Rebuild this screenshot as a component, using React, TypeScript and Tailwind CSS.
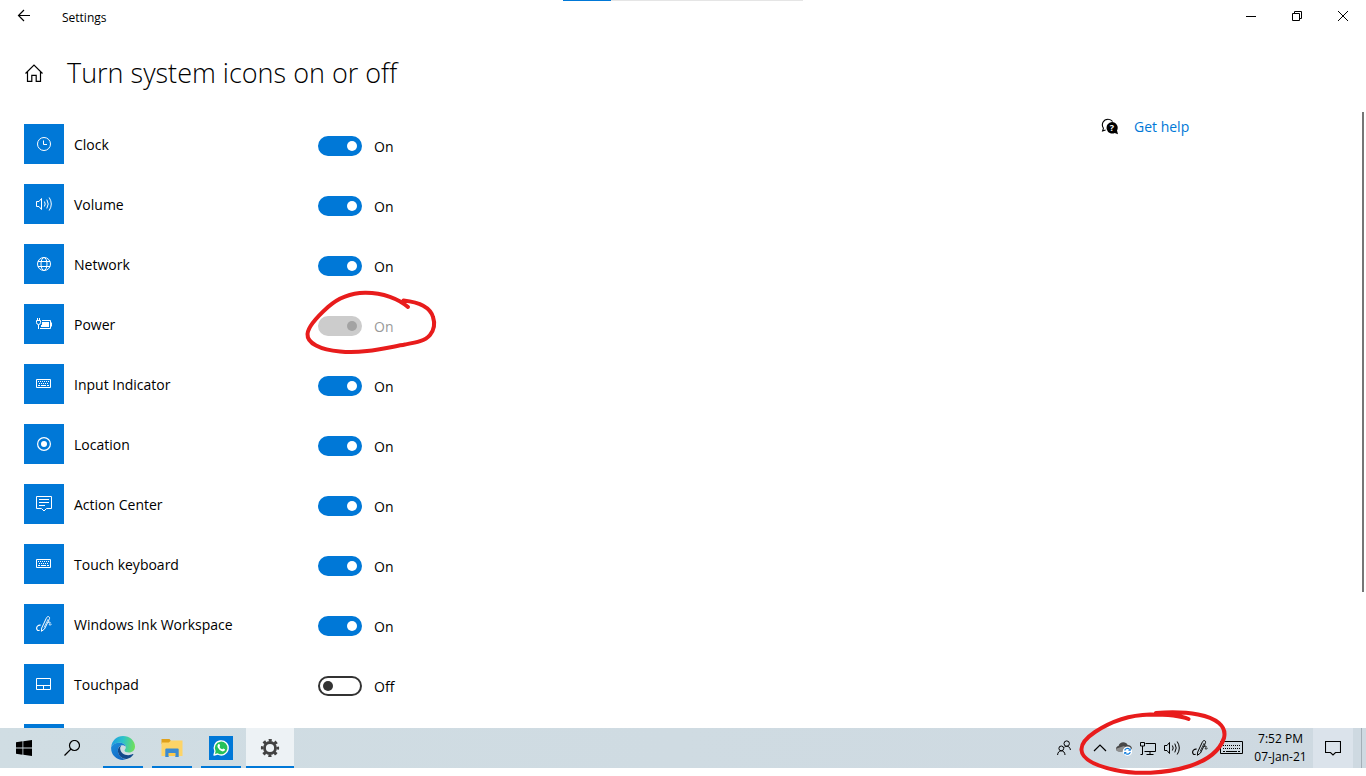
import { useState } from 'react';
import type { ReactNode } from 'react';

function Glyph({ className = 'size-4', children }: { className?: string; children: ReactNode }) {
  return (
    <svg viewBox="0 0 16 16" className={className} fill="none" stroke="currentColor" aria-hidden="true">
      {children}
    </svg>
  );
}

const ClockIcon = () => (
  <Glyph>
    <circle cx="8" cy="8" r="6.5" />
    <path d="M7.5 4.5v4H11" />
  </Glyph>
);

const VolumeIcon = () => (
  <Glyph>
    <path d="M.5 5.5H3l2.5-3v11l-2.5-3H.5z" />
    <path d="M8.4 5.5q1.6 2.5 0 5M10.8 3.6q2.8 4.4 0 8.8M13.2 1.5q4.2 6.5 0 13" />
  </Glyph>
);

const GlobeIcon = () => (
  <Glyph>
    <circle cx="8" cy="8" r="6.5" />
    <ellipse cx="8" cy="8" rx="3" ry="6.5" />
    <path d="M2 5.5h12M2 10.5h12" />
  </Glyph>
);

const PowerIcon = () => (
  <Glyph>
    <path d="M6 4.5h8.5v8H4" />
    <path d="M6 6h7v5H5V9h1z" fill="currentColor" stroke="none" />
    <path d="M15.5 6.5v4M1.5 2v2M3.5 2v2M.5 4.5h4v2a2 2 0 0 1-4 0zM2.5 8.500v4.5" />
  </Glyph>
);

const KeyboardIcon = () => (
  <Glyph>
    <path d="M.5 3.5h14v8H.5z" />
    <path d="M2 5.5h11M3 7.5h10" strokeDasharray="1 1" />
    <path d="M2 9.5h2M5 9.5h5M11 9.5h2" />
  </Glyph>
);

const LocationIcon = () => (
  <Glyph>
    <circle cx="8" cy="8" r="6.4" strokeWidth="1.2" />
    <circle cx="8" cy="8" r="3" fill="currentColor" stroke="none" />
  </Glyph>
);

const ActionCenterIcon = () => (
  <Glyph>
    <path d="M.5.5h15v12h-5L8 15l-2.5-2.5h-5z" />
    <path d="M3 3.5h10M3 6.5h10M3 9.5h6" />
  </Glyph>
);

const InkIcon = () => (
  <Glyph>
    <path d="M4.6 9.2C2.4 8.8.6 10.4.6 12.3c0 1.700 1.300 2.500 3 2.100" strokeWidth="1.200" />
    <path d="M5.400 15.300 5.700 12 10.300 2.200c.6-1.300 1.500-1.900 2.500-1.500 1 .5 1 1.500.4 2.800L8.500 13z" />
    <path d="M8 11.500 12.200 3" strokeWidth=".7" />
    <path d="M12 6.700c1-.8 2.200-.7 2.300 0 .1.700-1.300 1.200-1 2 .3.600 1.400.200 2.200-.4" />
  </Glyph>
);

const TouchpadIcon = () => (
  <Glyph>
    <path d="M.5 2.5h14v11H.5zM.5 9.5h14M7.5 9.5v4" />
  </Glyph>
);

const HomeIcon = () => (
  <svg viewBox="0 0 20 20" className="size-5" fill="none" stroke="currentColor" strokeWidth="1.2" aria-hidden="true">
    <path d="M1.5 10.5 10 2l8.5 8.5M3.5 9v9.4h4.3v-6h4.400v6h4.300V9" />
  </svg>
);

const HelpIcon = () => (
  <svg viewBox="0 0 18 18" className="size-[18px]" aria-hidden="true">
    <path
      d="M2.500 10.200C-.2 6.500 2.300 1.200 7 1.200c2 0 3.600.9 4.600 2.300M2.500 10.200 1.600 13l3-1"
      fill="none"
      stroke="#000"
      strokeWidth="1.100"
    />
    <path d="M11 4a5.800 5.800 0 0 1 5 8.600l1 3.600-3.300-1.100A5.800 5.800 0 1 1 11 4z" />
    <text x="11" y="13" fill="#fff" fontSize="9" fontWeight="700" textAnchor="middle">?</text>
  </svg>
);

const StartIcon = () => (
  <svg viewBox="0 0 16 16" className="size-4" aria-hidden="true">
    <path d="M0 2.200 6.500 1.300v6.200H0zM7.300 1.200 16 0v7.500H7.300zM0 8.400h6.500v6.300L0 13.800zM7.300 8.400H16V16l-8.700-1.200z" />
  </svg>
);

const SearchIcon = () => (
  <Glyph>
    <circle cx="10.5" cy="5.5" r="5" strokeWidth="1.2" />
    <path d="M6.9 9.1.5 15.5" strokeWidth="1.3" />
  </Glyph>
);

const EdgeIcon = () => (
  <svg viewBox="0 0 24 24" className="size-6" aria-hidden="true">
    <defs>
      <linearGradient id="edgeTop" x1="0" y1="0.3" x2="1" y2="0.4">
        <stop offset="0" stopColor="#1b9de2" />
        <stop offset="0.5" stopColor="#2fc3c8" />
        <stop offset="1" stopColor="#6fe05a" />
      </linearGradient>
      <linearGradient id="edgeLeft" x1="0" y1="0" x2="0.6" y2="1">
        <stop offset="0" stopColor="#1d8fdc" />
        <stop offset="1" stopColor="#1169c4" />
      </linearGradient>
    </defs>
    <path
      d="M.2 11C.8 4.600 5.900 0 12 0c6.800 0 12 4.800 12 10.400 0 3.700-2.700 6-6 6-2.800 0-4.500-1-4.500-2 0-.8 1.300-1.300 1.300-3.200C14.800 8.600 12 6.800 8.600 6.800 4.600 6.800 1.400 8.400.2 11z"
      fill="url(#edgeTop)"
    />
    <path
      d="M.2 11C1.500 8.300 4.500 6.800 8.600 6.800c3.400 0 6 1.700 6.200 4-.8-1-2-1.500-3.300-1.500-2.800 0-4.600 2.300-4.600 5.200 0 4.700 3.800 8.600 8.700 8.300-1.200.7-2.500 1.200-4 1.200C5.200 24-.6 18.400.2 11z"
      fill="url(#edgeLeft)"
    />
    <path
      d="M6.900 14.500c0-2.500 1.400-4.500 3.600-5.100-1 .9-1.500 2.200-1.300 3.600.4 3.600 3.800 6.200 8 6.200 1.800 0 3.200-.5 4.500-1.200.6-.3 1 .1.700.6-1.400 2.300-3.900 4.100-6.600 4.300-5 .2-8.900-3.600-8.900-8.400z"
      fill="#114a8b"
    />
  </svg>
);

const ExplorerIcon = () => (
  <svg viewBox="0 0 22 20" className="h-5 w-[22px]" aria-hidden="true">
    <path d="M.5 1h8l1.500 2v3H.5z" fill="#e0a11b" />
    <path d="M.5 4.5h7.300L10 2.500h11.500V18H.5z" fill="#fdd467" />
    <path d="M4.300 18v-6.500q0-1 1-1h11.400q1 0 1 1V19h-3.400v-4H7.700v4H4.300z" fill="#3c8bd0" />
    <path d="M7.700 15h6.600v3H7.700z" fill="#fbc94d" />
  </svg>
);

const WhatsAppIcon = () => (
  <svg viewBox="0 0 24 24" className="size-6 bg-[#0078d7]" aria-hidden="true">
    <path d="M5 19l1-3.800A7 7 0 1 1 8.700 18z" fill="#25c15a" stroke="#fff" strokeWidth="1.300" strokeLinejoin="round" />
    <path
      d="M9.300 8.200c.4-.3 1-.3 1.200.1l.6 1.400c.1.400-.6.900-.6 1.200.5 1.100 1.400 1.900 2.600 2.400.4 0 .8-.9 1.200-.8l1.500.8c.4.200.2.900-.1 1.300-.8.900-2 1-3.200.5a7.600 7.600 0 0 1-3.700-3.500c-.5-1.300-.4-2.600.5-3.400z"
      fill="#fff"
    />
  </svg>
);

const GearIcon = () => (
  <svg viewBox="0 0 20 20" className="size-5" fill="none" stroke="#424242" aria-hidden="true">
    <circle cx="10" cy="10" r="5.5" strokeWidth="2.8" />
    <circle cx="10" cy="10" r="7.8" strokeWidth="2.6" strokeDasharray="3.1 3.026" strokeDashoffset="1.55" />
  </svg>
);

const PeopleIcon = () => (
  <Glyph>
    <circle cx="10.7" cy="3.6" r="2.7" />
    <circle cx="5.3" cy="8.4" r="2.4" />
    <path d="M1.600 15c.1-2.600 1.600-4.200 3.700-4.200S8.900 12.400 9 15M8.400 7.200c2.600-2 5.700-.6 6 2.800" />
  </Glyph>
);

const ChevronIcon = () => (
  <Glyph>
    <path d="m2 11 6-6 6 6" strokeWidth="1.2" />
  </Glyph>
);

const OneDriveIcon = () => (
  <svg viewBox="0 0 16 16" className="size-4" aria-hidden="true">
    <path
      d="M3.200 11.500C1.200 11.500 0 10.300 0 8.700 0 7.200 1 6.100 2.500 5.900 3.200 3.700 5 2.300 7.300 2.300c2 0 3.600 1 4.400 2.700 2.300 0 4.300 1.500 4.300 3.700 0 1.700-1.200 2.800-3 2.800z"
      fill="#484848"
    />
    <path d="M3.200 11.500C1.200 11.500 0 10.300 0 8.700L8 6l5 5.500z" fill="#8f8f8f" />
    <circle cx="11.500" cy="11.300" r="4.700" fill="#fff" />
    <path d="M8.700 10.500a2.900 2.900 0 0 1 4.900-1.200M14.300 12.100a2.900 2.900 0 0 1-4.900 1.200" fill="none" stroke="#0c7bdc" strokeWidth="1.200" />
    <path d="M14.800 8v2.700h-2.700zM8.200 14.600v-2.700h2.700z" fill="#0c7bdc" />
  </svg>
);

const EthernetIcon = () => (
  <Glyph>
    <path d="M5.500 3.500h10v8h-11M10 11.500v3M6.500 14.500h7M.5 2.500h4v3.500h-4zM2.500 6v8.500H.5" />
  </Glyph>
);

const TrayKeyboardIcon = () => (
  <svg viewBox="0 0 24 14" className="h-3.5 w-6" fill="none" stroke="currentColor" aria-hidden="true">
    <path d="M.5.5h22v12H.5z" />
    <path d="M3 4.5h18M3 7.5h18" strokeDasharray="1 1" />
    <path d="M3 10.5h2M6 10.5h11M18 10.5h2" />
  </svg>
);

const NotificationIcon = () => (
  <Glyph>
    <path d="M.5 1.5h15v11h-5L8 15l-2.5-2.5h-5z" strokeWidth="1.1" />
  </Glyph>
);

interface SystemIcon {
  id: string;
  label: string;
  icon: () => ReactNode;
  on: boolean;
  locked?: boolean;
}

const systemIcons: SystemIcon[] = [
  { id: 'clock', label: 'Clock', icon: ClockIcon, on: true },
  { id: 'volume', label: 'Volume', icon: VolumeIcon, on: true },
  { id: 'network', label: 'Network', icon: GlobeIcon, on: true },
  { id: 'power', label: 'Power', icon: PowerIcon, on: true, locked: true },
  { id: 'input', label: 'Input Indicator', icon: KeyboardIcon, on: true },
  { id: 'location', label: 'Location', icon: LocationIcon, on: true },
  { id: 'action-center', label: 'Action Center', icon: ActionCenterIcon, on: true },
  { id: 'touch-keyboard', label: 'Touch keyboard', icon: KeyboardIcon, on: true },
  { id: 'ink', label: 'Windows Ink Workspace', icon: InkIcon, on: true },
  { id: 'touchpad', label: 'Touchpad', icon: TouchpadIcon, on: false },
];

interface RedCircleProps {
  className: string;
  viewBox: string;
  d: string;
}

function RedCircle({ className, viewBox, d }: RedCircleProps) {
  return (
    <svg
      viewBox={viewBox}
      className={className}
      fill="none"
      stroke="#e81c1c"
      strokeWidth="4"
      strokeLinecap="round"
      strokeLinejoin="round"
      aria-hidden="true"
    >
      <path d={d} />
    </svg>
  );
}

function SettingRow({ item }: { item: SystemIcon }) {
  const [on, setOn] = useState(item.on);
  const Icon = item.icon;

  return (
    <li className="relative flex h-10 items-center">
      <div className="flex size-10 items-center justify-center bg-[#0078d7] text-white">
        <Icon />
      </div>
      <label htmlFor={item.id} className="ml-2.5 w-61 pt-0.5">
        {item.label}
      </label>
      <div className="flex items-center gap-3 pt-1">
        <input
          id={item.id}
          type="checkbox"
          role="switch"
          checked={on}
          disabled={item.locked}
          onChange={(e) => setOn(e.target.checked)}
          className="flex h-5 w-11 appearance-none items-center rounded-full border-2 border-[#333] px-[3px] before:size-2.5 before:rounded-full before:bg-[#333] checked:justify-end checked:border-[#0078d7] checked:bg-[#0078d7] checked:before:bg-white disabled:border-[#ccc] disabled:bg-[#ccc] disabled:before:bg-[#a3a3a3]"
        />
        <span className={item.locked ? 'pt-0.5 text-[#999]' : 'pt-0.5'}>{on ? 'On' : 'Off'}</span>
      </div>
      {item.locked && (
        <RedCircle
          className="pointer-events-none absolute -top-[18px] left-[276px] h-[72px] w-36"
          viewBox="300 286 144 72"
          d="M408 307C399 299 383 292.500 365 292.700C350 293 338 298 328 307C318 316 308 326 307.500 334C307 343 320 350 340 351.500C362 354 385 348 405 344.500C416 342.500 425 341 430 335C434 330 435 323 433 317C430 307 418 302 403.500 300.500"
        />
      )}
    </li>
  );
}

function TitleBar() {
  return (
    <header className="relative flex h-8 shrink-0 items-center">
      <div className="absolute inset-x-0 top-0 flex h-px justify-center">
        <div className="w-12 bg-[#0078d7]" />
        <div className="w-48 bg-[#e5e5e5]" />
      </div>
      <button aria-label="Back" className="flex h-8 w-12 items-center justify-center">
        <Glyph>
          <path d="M14 7.5H2.5M8 2 2.500 7.500 8 13" strokeWidth="1.2" />
        </Glyph>
      </button>
      <span className="ml-3.5 flex-1 pt-1 text-xs">Settings</span>
      <button aria-label="Minimize" className="flex h-8 w-[46px] items-center justify-center">
        <Glyph>
          <path d="M3 8.5h10" />
        </Glyph>
      </button>
      <button aria-label="Restore" className="flex h-8 w-[46px] items-center justify-center">
        <Glyph>
          <path d="M3.5 5.5h7v7h-7zM5.500 5V3.500h7v7H11" />
        </Glyph>
      </button>
      <button aria-label="Close" className="flex h-8 w-[46px] items-center justify-center">
        <Glyph>
          <path d="m3 3 10 10M13 3 3 13" />
        </Glyph>
      </button>
    </header>
  );
}

function Taskbar() {
  return (
    <footer className="relative flex h-10 shrink-0 items-stretch bg-linear-to-r from-[#d0dde3] to-[#ced9e1]">
      <button aria-label="Start" className="flex w-12 items-center justify-center">
        <StartIcon />
      </button>
      <button aria-label="Search" className="flex w-12 items-center justify-center">
        <SearchIcon />
      </button>
      <div className="flex gap-[9px] pr-[5px] pl-[7px]">
        <button aria-label="Microsoft Edge" className="flex w-10 items-center justify-center border-b-2 border-[#0078d7] pt-0.5">
          <EdgeIcon />
        </button>
        <button aria-label="File Explorer" className="flex w-10 items-center justify-center border-b-2 border-[#0078d7] pt-0.5">
          <ExplorerIcon />
        </button>
        <button aria-label="WhatsApp" className="flex w-10 items-center justify-center border-b-2 border-[#0078d7] pt-0.5">
          <WhatsAppIcon />
        </button>
      </div>
      <button aria-label="Settings" className="flex w-12 items-center justify-center border-b-2 border-[#0078d7] bg-[#edf2f5] pt-0.5">
        <GearIcon />
      </button>

      <div className="ml-auto flex items-stretch">
        <button aria-label="People" className="mr-2 flex w-8 items-center justify-center">
          <PeopleIcon />
        </button>
        <button aria-label="Show hidden icons" className="flex w-6 items-center justify-center">
          <ChevronIcon />
        </button>
        <button aria-label="OneDrive" className="flex w-6 items-center justify-center">
          <OneDriveIcon />
        </button>
        <button aria-label="Network status" className="flex w-6 items-center justify-center">
          <EthernetIcon />
        </button>
        <button aria-label="Speakers" className="flex w-6 items-center justify-center">
          <VolumeIcon />
        </button>
        <button aria-label="Ink Workspace" className="flex w-8 items-center justify-center">
          <InkIcon />
        </button>
        <button aria-label="Keyboard" className="flex w-8 items-center justify-center">
          <TrayKeyboardIcon />
        </button>
        <button className="flex w-[65px] flex-col items-center justify-center text-xs leading-[18px]">
          <span>7:52 PM</span>
          <span>07-Jan-21</span>
        </button>
        <button aria-label="Notifications" className="mr-2 flex w-10 items-center justify-center bg-[#dbe3eb]">
          <NotificationIcon />
        </button>
        <button aria-label="Show desktop" className="w-[5px] border-l border-[#a4afb7]" />
      </div>

      <RedCircle
        className="pointer-events-none absolute -top-6 right-[134px] h-18 w-[158px]"
        viewBox="1074 704 158 72"
        d="M1188.500 719C1180 715.500 1165 714.500 1150 714.500C1130 715 1110 722 1095 732C1086 738 1081 744 1081.500 750C1082 760 1097 766 1115 770C1135 774.500 1165 774 1190 766C1208 760 1220 750 1224 738C1227 726 1216 718 1198 714.500C1185 712 1170 712 1156 713"
      />
    </footer>
  );
}

export default function App() {
  return (
    <div className="flex h-screen flex-col overflow-hidden bg-white pb-2 font-['Open_Sans','Noto_Sans',sans-serif] text-sm text-black">
      <TitleBar />
      <div className="flex h-20 shrink-0 items-center gap-[23px] pt-0.5 pl-6">
        <a href="#home" aria-label="Home">
          <HomeIcon />
        </a>
        <h1 className="text-[27px] font-light">Turn system icons on or off</h1>
      </div>

      <main className="flex min-h-0 flex-1 overflow-hidden">
        <ul className="flex flex-1 flex-col gap-5 pt-3 pl-6">
          {systemIcons.map((item) => (
            <SettingRow key={item.id} item={item} />
          ))}
          <li className="size-10 shrink-0 bg-[#0078d7]" />
        </ul>
        <aside className="w-[261px] pt-[5px]">
          <a href="#help" className="flex items-center gap-[15px] text-[#0078d7]">
            <HelpIcon />
            Get help
          </a>
        </aside>
        <div className="mr-0.5 h-[78%] w-0.5 bg-[#767676]" />
      </main>

      <Taskbar />
    </div>
  );
}
